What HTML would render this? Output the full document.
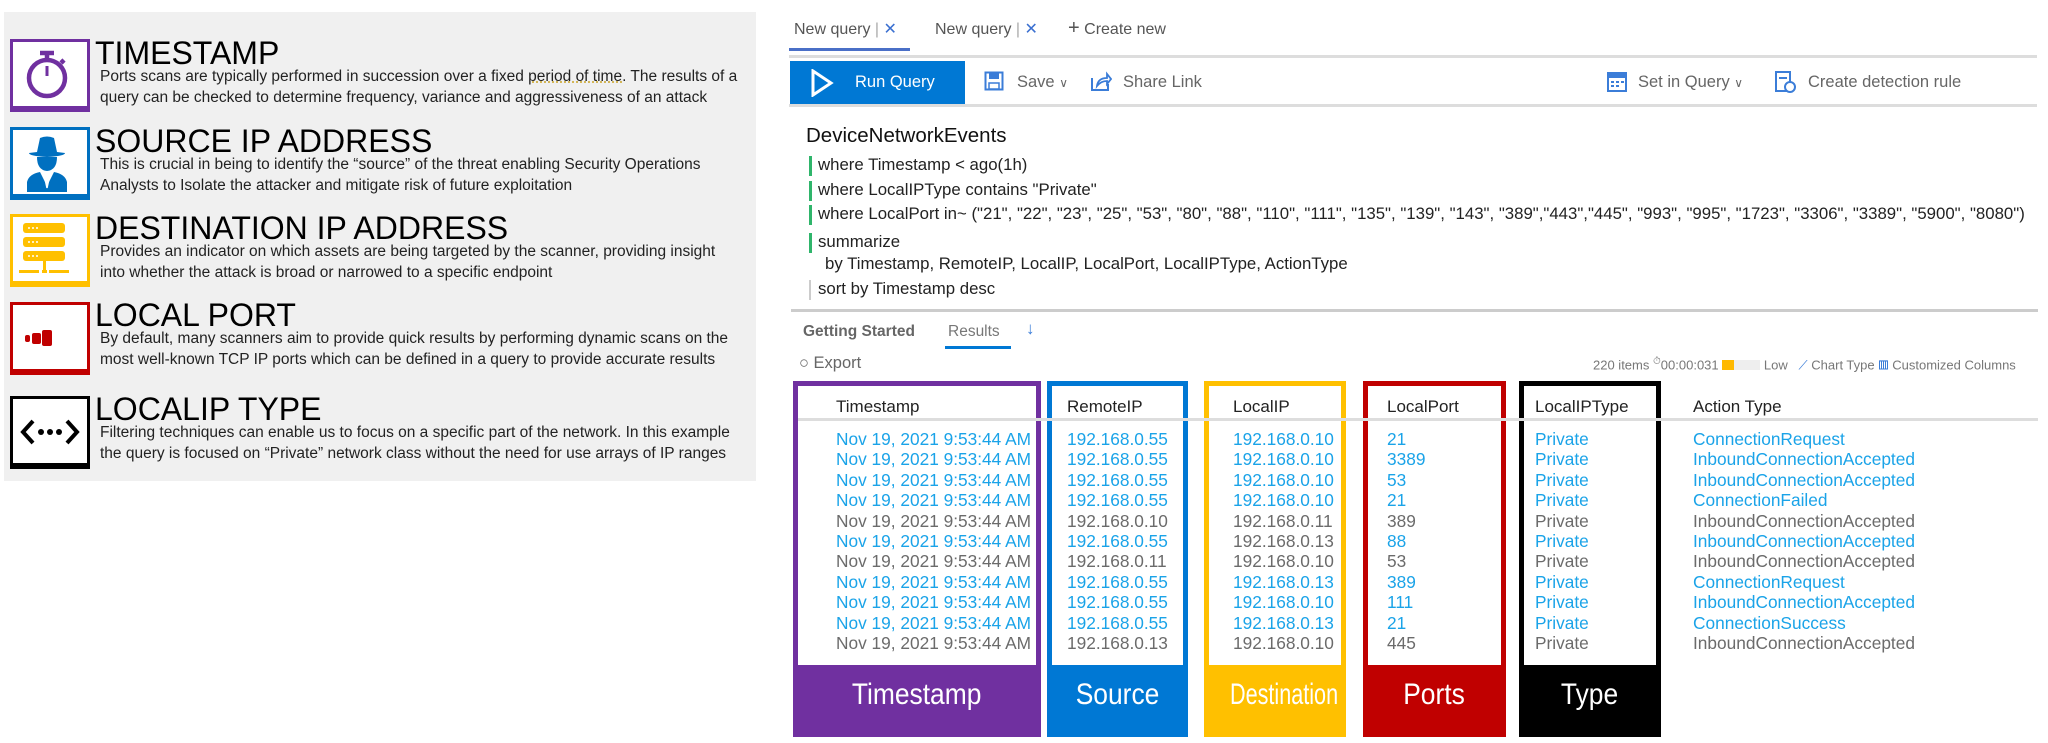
<!DOCTYPE html>
<html><head><meta charset="utf-8"><style>
*{margin:0;padding:0;box-sizing:border-box}
body{width:2048px;height:743px;background:#fff;position:relative;overflow:hidden;font-family:"Liberation Sans",sans-serif}
.a{position:absolute;white-space:nowrap}
.lp{left:4px;top:12px;width:752px;height:469px;background:#f0f0f0}
.ib{position:absolute;left:10px;width:80px;height:73px;background:#fff;border:3px solid;border-bottom-width:6px}
.tt{position:absolute;left:95px;font-size:32px;color:#000;line-height:31px}
.bd{position:absolute;left:100px;font-size:15.5px;color:#222;line-height:21px}
.tab{font-size:16px;color:#555}
.cl{font-size:16.8px;color:#222}
.gb{position:absolute;left:809px;width:3px;height:20px;background:#2fb56b}
.col{position:absolute;top:381px;height:356px;border:5px solid}
.col .w{position:absolute;left:0;right:0;top:0;height:284px;background:#fff}
.col .lb{position:absolute;left:0;right:0;bottom:0;height:67px;color:#fff;font-size:30px;text-align:center;line-height:60px}
.col .lb span{display:inline-block;transform:scaleX(.88)}
.hd{position:absolute;top:397px;font-size:17px;color:#222}
.r{position:absolute;font-size:17.3px;line-height:20.4px}
.b{color:#1aa3e8}.g{color:#6b6b6b}
</style></head><body>
<div class="a lp"></div>
<div class="ib" style="top:39px;border-color:#7030a0">
<svg width="74" height="64" viewBox="0 0 74 64"><g fill="none" stroke="#7030a0" stroke-width="4.5"><circle cx="34" cy="36" r="18"/><line x1="34" y1="12" x2="34" y2="18"/><line x1="27" y1="11" x2="41" y2="11"/><line x1="34" y1="24" x2="34" y2="34" stroke-width="3"/><line x1="48" y1="21" x2="51" y2="18"/></g></svg></div>
<div class="ib" style="top:127px;border-color:#0070c0">
<svg width="74" height="64" viewBox="0 0 74 64"><g fill="#0070c0"><path d="M24 22 L27 8 Q34 5 41 8 L44 22 L52 23 Q52 26 34 27 Q16 26 16 23Z"/><path d="M24 27 Q24 40 34 41 Q44 40 44 27Z"/><path d="M14 62 L14 52 Q16 44 27 42 L34 56 L41 42 Q52 44 54 52 L54 62Z"/></g><path d="M31 44 L34 58 L37 44" stroke="#fff" stroke-width="1.5" fill="none"/></svg></div>
<div class="ib" style="top:214px;border-color:#ffc000">
<svg width="74" height="64" viewBox="0 0 74 64"><g fill="#ffc000"><rect x="10" y="6" width="42" height="10" rx="3"/><rect x="10" y="20" width="42" height="10" rx="3"/><rect x="10" y="34" width="42" height="10" rx="3"/><rect x="30" y="44" width="3" height="10"/><rect x="6" y="53" width="20" height="3"/><rect x="36" y="53" width="20" height="3"/><rect x="29" y="53" width="5" height="3"/></g><g fill="#fff"><circle cx="16" cy="11" r="1"/><circle cx="20" cy="11" r="1"/><circle cx="24" cy="11" r="1"/><circle cx="16" cy="25" r="1"/><circle cx="20" cy="25" r="1"/><circle cx="24" cy="25" r="1"/><circle cx="16" cy="39" r="1"/><circle cx="20" cy="39" r="1"/><circle cx="24" cy="39" r="1"/></g></svg></div>
<div class="ib" style="top:302px;border-color:#c00000">
<svg width="74" height="64" viewBox="0 0 74 64"><g fill="#c00000"><rect x="12" y="30" width="5" height="7" rx="2"/><rect x="19" y="28" width="9" height="11" rx="2"/><rect x="29" y="25" width="10" height="16" rx="2"/></g></svg></div>
<div class="ib" style="top:396px;border-color:#000">
<svg width="74" height="64" viewBox="0 0 74 64"><g fill="none" stroke="#000" stroke-width="4"><path d="M20 22 L10 33 L20 44"/><path d="M54 22 L64 33 L54 44"/></g><g fill="#000"><circle cx="28" cy="33" r="3"/><circle cx="37" cy="33" r="3"/><circle cx="46" cy="33" r="3"/></g></svg></div>
<div class="tt" style="top:38px">TIMESTAMP</div>
<div class="bd" style="top:66px">Ports scans are typically performed in succession over a fixed <span style="text-decoration:underline dotted #c9a227">period of time</span>. The results of a<br>query can be checked to determine frequency, variance and aggressiveness of an attack</div>
<div class="tt" style="top:126px">SOURCE IP ADDRESS</div>
<div class="bd" style="top:154px">This is crucial in being to identify the “source” of the threat enabling Security Operations<br>Analysts to Isolate the attacker and mitigate risk of future exploitation</div>
<div class="tt" style="top:213px">DESTINATION IP ADDRESS</div>
<div class="bd" style="top:241px">Provides an indicator on which assets are being targeted by the scanner, providing insight<br>into whether the attack is broad or narrowed to a specific endpoint</div>
<div class="tt" style="top:300px">LOCAL PORT</div>
<div class="bd" style="top:328px">By default, many scanners aim to provide quick results by performing dynamic scans on the<br>most well-known TCP IP ports which can be defined in a query to provide accurate results</div>
<div class="tt" style="top:394px">LOCALIP TYPE</div>
<div class="bd" style="top:422px">Filtering techniques can enable us to focus on a specific part of the network. In this example<br>the query is focused on “Private” network class without the need for use arrays of IP ranges</div>

<div class="a tab" style="left:794px;top:19px">New query <span style="color:#aaa">|</span> <span style="color:#3a6fd0">✕</span></div>
<div class="a tab" style="left:935px;top:19px">New query <span style="color:#aaa">|</span> <span style="color:#3a6fd0">✕</span></div>
<div class="a tab" style="left:1068px;top:17px"><span style="font-size:20px">+</span> Create new</div>
<div class="a" style="left:789px;top:48px;width:121px;height:3px;background:#4a6fc7"></div>
<div class="a" style="left:789px;top:55px;width:1248px;height:3px;background:#ddd"></div>
<div class="a" style="left:790px;top:61px;width:175px;height:43px;background:#0078d4"></div>
<svg class="a" style="left:810px;top:69px" width="24" height="28"><path d="M3 2 L21 14 L3 26Z" fill="none" stroke="#fff" stroke-width="3"/></svg>
<div class="a" style="left:855px;top:73px;font-size:16.5px;color:#fff">Run Query</div>
<div class="a" style="left:789px;top:104px;width:1248px;height:3px;background:#ddd"></div>
<svg class="a" style="left:984px;top:71px" width="20" height="20"><rect x="1.5" y="1.5" width="17" height="17" fill="none" stroke="#3b7dd8" stroke-width="2"/><rect x="5" y="2" width="10" height="6" fill="#3b7dd8"/><rect x="5" y="12" width="10" height="6" fill="none" stroke="#3b7dd8" stroke-width="1.5"/></svg>
<div class="a" style="left:1017px;top:73px;font-size:16.5px;color:#666">Save <span style="font-size:12px">∨</span></div>
<svg class="a" style="left:1090px;top:70px" width="22" height="22"><path d="M2 8 V20 H18 V14" fill="none" stroke="#3b7dd8" stroke-width="2"/><path d="M7 16 Q8 8 17 8 V4 L21 9 L17 14 V11 Q11 11 7 16Z" fill="none" stroke="#3b7dd8" stroke-width="1.8"/></svg>
<div class="a" style="left:1123px;top:73px;font-size:16.5px;color:#666">Share Link</div>
<svg class="a" style="left:1607px;top:70px" width="20" height="22"><rect x="1" y="3" width="18" height="18" fill="none" stroke="#3b7dd8" stroke-width="2"/><rect x="1" y="3" width="18" height="5" fill="#3b7dd8"/><g fill="#3b7dd8"><rect x="4" y="11" width="3" height="2"/><rect x="9" y="11" width="3" height="2"/><rect x="14" y="11" width="3" height="2"/><rect x="4" y="15" width="3" height="2"/><rect x="9" y="15" width="3" height="2"/></g></svg>
<div class="a" style="left:1638px;top:73px;font-size:16.5px;color:#666">Set in Query <span style="font-size:12px">∨</span></div>
<svg class="a" style="left:1774px;top:69px" width="24" height="26"><rect x="2" y="3" width="14" height="19" fill="none" stroke="#3b7dd8" stroke-width="2"/><line x1="5" y1="9" x2="13" y2="9" stroke="#3b7dd8" stroke-width="2"/><circle cx="16" cy="18" r="5" fill="#fff" stroke="#3b7dd8" stroke-width="2"/></svg>
<div class="a" style="left:1808px;top:73px;font-size:16.5px;color:#666">Create detection rule</div>

<div class="a" style="left:806px;top:124px;font-size:20.5px;color:#111">DeviceNetworkEvents</div>
<div class="gb" style="top:156px"></div><div class="a cl" style="left:818px;top:155px">where Timestamp &lt; ago(1h)</div>
<div class="gb" style="top:181px"></div><div class="a cl" style="left:818px;top:180px">where LocalIPType contains "Private"</div>
<div class="gb" style="top:205px"></div><div class="a cl" style="left:818px;top:204px">where LocalPort in~ ("21", "22", "23", "25", "53", "80", "88", "110", "111", "135", "139", "143", "389","443","445", "993", "995", "1723", "3306", "3389", "5900", "8080")</div>
<div class="gb" style="top:233px"></div><div class="a cl" style="left:818px;top:232px">summarize</div>
<div class="a cl" style="left:825px;top:254px">by Timestamp, RemoteIP, LocalIP, LocalPort, LocalIPType, ActionType</div>
<div class="gb" style="top:280px;background:#ccc;width:2px"></div><div class="a cl" style="left:818px;top:279px">sort by Timestamp desc</div>
<div class="a" style="left:791px;top:309px;width:1247px;height:3px;background:#ccc"></div>
<div class="a" style="left:803px;top:323px;font-size:15.5px;color:#666;font-weight:bold">Getting Started</div>
<div class="a" style="left:948px;top:323px;font-size:15.5px;color:#777">Results</div>
<div class="a" style="left:945px;top:346px;width:66px;height:3px;background:#0078d4"></div>
<div class="a" style="left:1026px;top:319px;font-size:17px;color:#3b7dd8">↓</div>
<div class="a" style="left:799px;top:354px;font-size:16.5px;color:#666">○ Export</div>
<div class="a" style="left:1593px;top:356px;font-size:13px;color:#777">220 items <sup style="font-size:10px">⏱</sup>00:00:031 <span style="display:inline-block;width:12px;height:10px;background:#ffb900;vertical-align:-1px"></span><span style="display:inline-block;width:26px;height:10px;background:#eee;vertical-align:-1px"></span> Low &nbsp;&nbsp;<span style="color:#3b7dd8">⟋</span> Chart Type <span style="color:#3b7dd8">▥</span> Customized Columns</div>

<div class="col" style="left:793px;width:248px;border-color:#7030a0"><div class="w"></div><div class="lb" style="background:#7030a0"><span>Timestamp</span></div></div>
<div class="col" style="left:1047px;width:141px;border-color:#0078d4"><div class="w"></div><div class="lb" style="background:#0078d4"><span>Source</span></div></div>
<div class="col" style="left:1204px;width:142px;border-color:#ffc000"><div class="w"></div><div class="lb" style="background:#ffc000"><span style="transform:scaleX(.72)">Destination</span></div></div>
<div class="col" style="left:1363px;width:143px;border-color:#c00000"><div class="w"></div><div class="lb" style="background:#c00000"><span>Ports</span></div></div>
<div class="col" style="left:1519px;width:142px;border-color:#000"><div class="w"></div><div class="lb" style="background:#000"><span>Type</span></div></div>
<div class="a" style="left:798px;top:418px;width:1240px;height:3px;background:#ddd"></div>
<div class="hd" style="left:836px">Timestamp</div>
<div class="hd" style="left:1067px">RemoteIP</div>
<div class="hd" style="left:1233px">LocalIP</div>
<div class="hd" style="left:1387px">LocalPort</div>
<div class="hd" style="left:1535px">LocalIPType</div>
<div class="hd" style="left:1693px">Action Type</div>
<div class="r" style="left:836px;top:429px"><div class="b">Nov 19, 2021 9:53:44 AM</div><div class="b">Nov 19, 2021 9:53:44 AM</div><div class="b">Nov 19, 2021 9:53:44 AM</div><div class="b">Nov 19, 2021 9:53:44 AM</div><div class="g">Nov 19, 2021 9:53:44 AM</div><div class="b">Nov 19, 2021 9:53:44 AM</div><div class="g">Nov 19, 2021 9:53:44 AM</div><div class="b">Nov 19, 2021 9:53:44 AM</div><div class="b">Nov 19, 2021 9:53:44 AM</div><div class="b">Nov 19, 2021 9:53:44 AM</div><div class="g">Nov 19, 2021 9:53:44 AM</div></div>
<div class="r" style="left:1067px;top:429px"><div class="b">192.168.0.55</div><div class="b">192.168.0.55</div><div class="b">192.168.0.55</div><div class="b">192.168.0.55</div><div class="g">192.168.0.10</div><div class="b">192.168.0.55</div><div class="g">192.168.0.11</div><div class="b">192.168.0.55</div><div class="b">192.168.0.55</div><div class="b">192.168.0.55</div><div class="g">192.168.0.13</div></div>
<div class="r" style="left:1233px;top:429px"><div class="b">192.168.0.10</div><div class="b">192.168.0.10</div><div class="b">192.168.0.10</div><div class="b">192.168.0.10</div><div class="g">192.168.0.11</div><div class="g">192.168.0.13</div><div class="g">192.168.0.10</div><div class="b">192.168.0.13</div><div class="b">192.168.0.10</div><div class="b">192.168.0.13</div><div class="g">192.168.0.10</div></div>
<div class="r" style="left:1387px;top:429px"><div class="b">21</div><div class="b">3389</div><div class="b">53</div><div class="b">21</div><div class="g">389</div><div class="b">88</div><div class="g">53</div><div class="b">389</div><div class="b">111</div><div class="b">21</div><div class="g">445</div></div>
<div class="r" style="left:1535px;top:429px"><div class="b">Private</div><div class="b">Private</div><div class="b">Private</div><div class="b">Private</div><div class="g">Private</div><div class="b">Private</div><div class="g">Private</div><div class="b">Private</div><div class="b">Private</div><div class="b">Private</div><div class="g">Private</div></div>
<div class="r" style="left:1693px;top:429px"><div class="b">ConnectionRequest</div><div class="b">InboundConnectionAccepted</div><div class="b">InboundConnectionAccepted</div><div class="b">ConnectionFailed</div><div class="g">InboundConnectionAccepted</div><div class="b">InboundConnectionAccepted</div><div class="g">InboundConnectionAccepted</div><div class="b">ConnectionRequest</div><div class="b">InboundConnectionAccepted</div><div class="b">ConnectionSuccess</div><div class="g">InboundConnectionAccepted</div></div>
</body></html>
